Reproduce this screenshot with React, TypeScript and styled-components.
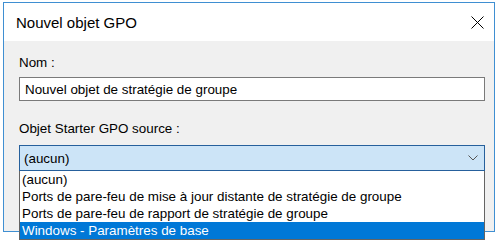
import React from 'react';
import styled, { createGlobalStyle } from 'styled-components';

const Global = createGlobalStyle`
  html, body {
    margin: 0;
    padding: 0;
    background: #ffffff;
  }
  body {
    font-family: 'Liberation Sans', Arial, sans-serif;
    color: #000;
  }
`;

const Page = styled.div`
  width: 500px;
  height: 246px;
  padding: 2px 0 0 3px;
  box-sizing: border-box;
`;

const Window = styled.div`
  width: 492px;
  height: 230px;
  box-sizing: border-box;
  border: 1px solid #3f8fd2;
  display: flex;
  flex-direction: column;
  background: #f0f0f0;
`;

const TitleBar = styled.div`
  height: 38px;
  background: #ffffff;
  display: flex;
  align-items: center;
  justify-content: space-between;
  padding: 0 10px 0 12px;
  font-size: 15px;
`;

const Close = styled.button`
  border: none;
  background: none;
  padding: 0;
  width: 14px;
  height: 14px;
  display: flex;
  align-items: center;
  justify-content: center;
`;

const Body = styled.div`
  flex: 1;
  padding: 14px 9px 0 15px;
  display: flex;
  flex-direction: column;
`;

const Label = styled.div<{ $gap: number }>`
  font-size: 13.4px;
  line-height: 16px;
  height: 16px;
  margin-bottom: ${(p) => p.$gap}px;
`;

const TextBox = styled.div`
  height: 24px;
  box-sizing: border-box;
  border: 1px solid #7a7a7a;
  background: #fff;
  font-size: 13.4px;
  display: flex;
  align-items: center;
  padding-left: 5px;
  margin-bottom: 20px;
`;

const ComboWrap = styled.div`
  position: relative;
`;

const Combo = styled.div`
  height: 26px;
  box-sizing: border-box;
  border: 1px solid #26609c;
  background: #cce4f7;
  font-size: 13.4px;
  display: flex;
  align-items: center;
  justify-content: space-between;
  padding: 0 6px 0 4px;
`;

const List = styled.ul`
  position: absolute;
  top: 100%;
  left: 0;
  right: 0;
  margin: 0;
  padding: 0;
  list-style: none;
  background: #fff;
  border: 1px solid #646464;
  border-top: none;
  z-index: 2;
`;

const Item = styled.li<{ $selected?: boolean }>`
  height: 17px;
  line-height: 17px;
  font-size: 13.4px;
  padding-left: 2px;
  white-space: nowrap;
  background: ${(p) => (p.$selected ? '#0078d7' : 'transparent')};
  color: ${(p) => (p.$selected ? '#fff' : '#000')};
`;

const options = [
  '(aucun)',
  'Ports de pare-feu de mise à jour distante de stratégie de groupe',
  'Ports de pare-feu de rapport de stratégie de groupe',
  'Windows - Paramètres de base',
];

export default function App() {
  return (
    <Page>
      <Global />
      <Window>
        <TitleBar>
          <span>Nouvel objet GPO</span>
          <Close aria-label="Fermer">
            <svg width="13" height="13" viewBox="0 0 13 13">
              <path d="M0.5 0.5 L12.5 12.5 M12.5 0.5 L0.5 12.5" stroke="#000" strokeWidth="1" />
            </svg>
          </Close>
        </TitleBar>
        <Body>
          <Label $gap={6}>Nom :</Label>
          <TextBox>Nouvel objet de stratégie de groupe</TextBox>
          <Label $gap={8}>Objet Starter GPO source :</Label>
          <ComboWrap>
            <Combo>
              <span>(aucun)</span>
              <svg width="10" height="6" viewBox="0 0 10 6">
                <path d="M0.5 0.5 L5 5 L9.5 0.5" fill="none" stroke="#555" strokeWidth="1" />
              </svg>
            </Combo>
            <List>
              {options.map((o, i) => (
                <Item key={o} $selected={i === options.length - 1}>
                  {o}
                </Item>
              ))}
            </List>
          </ComboWrap>
        </Body>
      </Window>
    </Page>
  );
}
